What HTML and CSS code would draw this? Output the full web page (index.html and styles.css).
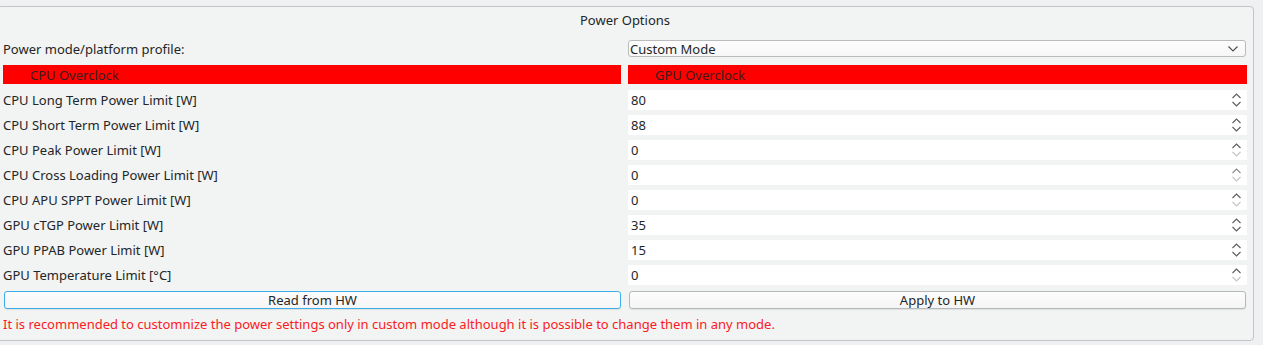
FILE: index.html
```html
<!DOCTYPE html>
<html>
<head>
<meta charset="utf-8">
<link rel="stylesheet" href="styles.css">
</head>
<body>
<div class="group">
  <div class="title">Power Options</div>
  <div class="row row-combo">
    <div class="label">Power mode/platform profile:</div>
    <div class="combo"><span>Custom Mode</span>
      <svg class="chev" width="10" height="6" viewBox="0 0 10 6"><polyline points="0.5,0.5 5,5 9.5,0.5" fill="none" stroke="#4d4d4d" stroke-width="1.1"/></svg>
    </div>
  </div>
  <div class="row row-bar">
    <div class="bar">CPU Overclock</div>
    <div class="bar">GPU Overclock</div>
  </div>
  <div class="row row-spin">
    <div class="label">CPU Long Term Power Limit [W]</div>
    <div class="spin"><span>80</span><span class="arrows"><svg width="9" height="14" viewBox="0 0 9 14"><polyline points="0.5,5 4.5,1 8.5,5" fill="none" stroke="#5c5c5c" stroke-width="1.1"/><polyline points="0.5,9 4.5,13 8.5,9" fill="none" stroke="#5c5c5c" stroke-width="1.1"/></svg></span></div>
  </div>
  <div class="row row-spin">
    <div class="label">CPU Short Term Power Limit [W]</div>
    <div class="spin"><span>88</span><span class="arrows"><svg width="9" height="14" viewBox="0 0 9 14"><polyline points="0.5,5 4.5,1 8.5,5" fill="none" stroke="#5c5c5c" stroke-width="1.1"/><polyline points="0.5,9 4.5,13 8.5,9" fill="none" stroke="#5c5c5c" stroke-width="1.1"/></svg></span></div>
  </div>
  <div class="row row-spin">
    <div class="label">CPU Peak Power Limit [W]</div>
    <div class="spin"><span>0</span><span class="arrows"><svg width="9" height="14" viewBox="0 0 9 14"><polyline points="0.5,5 4.5,1 8.5,5" fill="none" stroke="#5c5c5c" stroke-width="1.1"/><polyline points="0.5,9 4.5,13 8.5,9" fill="none" stroke="#c4c4c4" stroke-width="1.1"/></svg></span></div>
  </div>
  <div class="row row-spin">
    <div class="label">CPU Cross Loading Power Limit [W]</div>
    <div class="spin"><span>0</span><span class="arrows"><svg width="9" height="14" viewBox="0 0 9 14"><polyline points="0.5,5 4.5,1 8.5,5" fill="none" stroke="#8a8a8a" stroke-width="1.1"/><polyline points="0.5,9 4.5,13 8.5,9" fill="none" stroke="#c4c4c4" stroke-width="1.1"/></svg></span></div>
  </div>
  <div class="row row-spin">
    <div class="label">CPU APU SPPT Power Limit [W]</div>
    <div class="spin"><span>0</span><span class="arrows"><svg width="9" height="14" viewBox="0 0 9 14"><polyline points="0.5,5 4.5,1 8.5,5" fill="none" stroke="#5c5c5c" stroke-width="1.1"/><polyline points="0.5,9 4.5,13 8.5,9" fill="none" stroke="#c4c4c4" stroke-width="1.1"/></svg></span></div>
  </div>
  <div class="row row-spin">
    <div class="label">GPU cTGP Power Limit [W]</div>
    <div class="spin"><span>35</span><span class="arrows"><svg width="9" height="14" viewBox="0 0 9 14"><polyline points="0.5,5 4.5,1 8.5,5" fill="none" stroke="#5c5c5c" stroke-width="1.1"/><polyline points="0.5,9 4.5,13 8.5,9" fill="none" stroke="#5c5c5c" stroke-width="1.1"/></svg></span></div>
  </div>
  <div class="row row-spin">
    <div class="label">GPU PPAB Power Limit [W]</div>
    <div class="spin"><span>15</span><span class="arrows"><svg width="9" height="14" viewBox="0 0 9 14"><polyline points="0.5,5 4.5,1 8.5,5" fill="none" stroke="#5c5c5c" stroke-width="1.1"/><polyline points="0.5,9 4.5,13 8.5,9" fill="none" stroke="#5c5c5c" stroke-width="1.1"/></svg></span></div>
  </div>
  <div class="row row-spin">
    <div class="label">GPU Temperature Limit [°C]</div>
    <div class="spin"><span>0</span><span class="arrows"><svg width="9" height="14" viewBox="0 0 9 14"><polyline points="0.5,5 4.5,1 8.5,5" fill="none" stroke="#5c5c5c" stroke-width="1.1"/><polyline points="0.5,9 4.5,13 8.5,9" fill="none" stroke="#c4c4c4" stroke-width="1.1"/></svg></span></div>
  </div>
  <div class="row row-btn">
    <div class="btn focus">Read from HW</div>
    <div class="btn">Apply to HW</div>
  </div>
  <div class="error">It is recommended to customnize the power settings only in custom mode although it is possible to change them in any mode.</div>
</div>
</body>
</html>
```

FILE: styles.css
```css
html, body {
  margin: 0;
  padding: 0;
  background: #eff0f1;
}
body {
  font-family: "Noto Sans", "DejaVu Sans", sans-serif;
  font-size: 13px;
  color: #232627;
  width: 1263px;
  height: 345px;
  overflow: hidden;
}
.group {
  box-sizing: border-box;
  margin: 6px 9px 0 -3px;
  width: 1257px;
  height: 335px;
  border: 1px solid #c2c4c5;
  border-radius: 4px;
  padding: 0 6px 0 5px;
  background: #f2f3f3;
}
.title {
  height: 27px;
  line-height: 26px;
  text-align: center;
}
.row {
  display: grid;
  grid-template-columns: 618px 619px;
  column-gap: 7px;
}
.label {
  display: flex;
  align-items: center;
  white-space: nowrap;
}
.row-combo {
  margin-top: 6px;
  height: 17px;
}
.combo {
  box-sizing: border-box;
  width: 618px;
  height: 17px;
  border: 1px solid #b9bbbc;
  border-radius: 3px;
  background: linear-gradient(#fdfdfd, #f7f7f7);
  display: flex;
  align-items: center;
  justify-content: space-between;
  padding: 0 7px 0 1px;
}
.combo .chev {
  display: block;
}
.row-bar {
  margin-top: 8px;
  height: 19px;
}
.bar {
  background: #ff0000;
  color: #3c1c1c;
  padding-left: 27px;
  line-height: 20px;
  height: 19px;
  white-space: nowrap;
}
.row-spin {
  margin-top: 6px;
  height: 19px;
}
.spin {
  background: #ffffff;
  height: 20px;
  display: flex;
  align-items: center;
  justify-content: space-between;
  padding: 0 6px 0 3px;
}
.arrows svg {
  display: block;
}
.row-btn {
  margin-top: 7px;
  height: 18px;
}
.btn {
  box-sizing: border-box;
  height: 18px;
  margin-left: 1px;
  width: 617px;
  border: 1px solid #b6b8b9;
  border-radius: 3px;
  background: linear-gradient(#fcfcfc, #f5f5f5);
  box-shadow: 0 1px 1px rgba(0,0,0,0.08);
  text-align: center;
  line-height: 16px;
  white-space: nowrap;
}
.btn.focus {
  border-color: #3daee9;
}
.error {
  margin-top: 6px;
  color: #fb1b22;
  line-height: 18px;
  white-space: nowrap;
}
```
